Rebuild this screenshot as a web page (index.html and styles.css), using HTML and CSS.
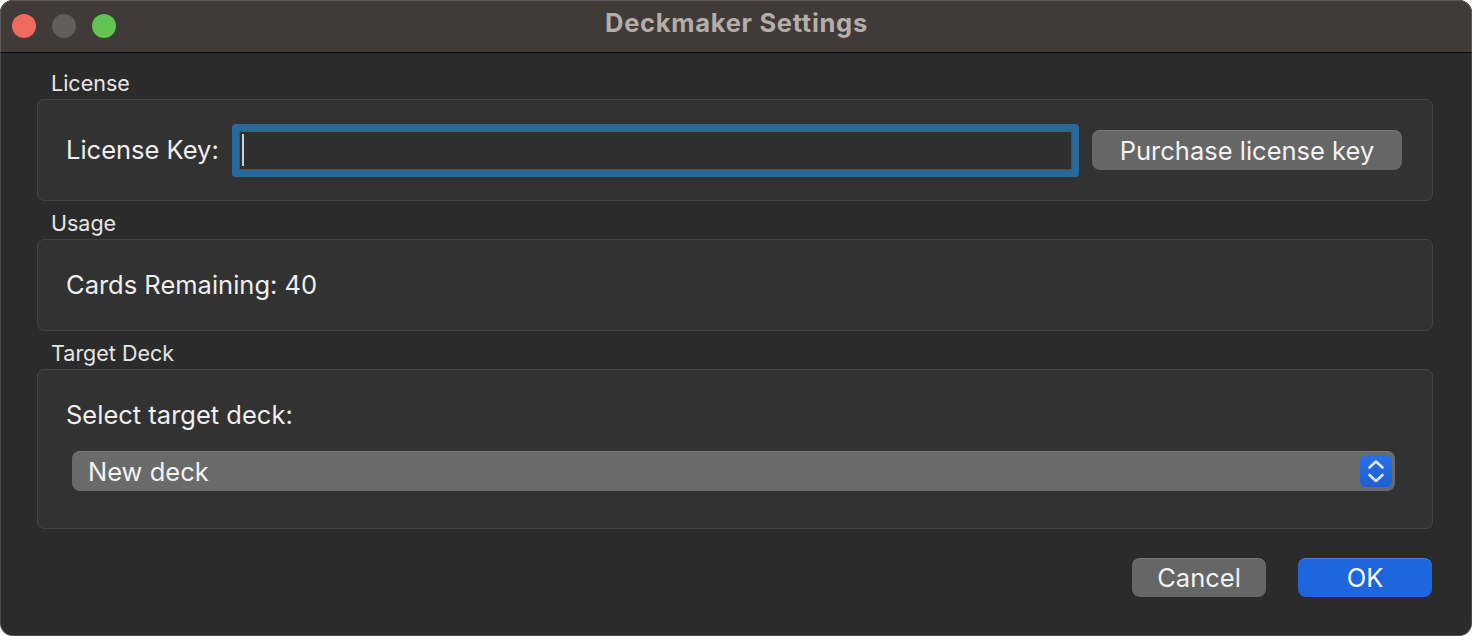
FILE: index.html
```html
<!DOCTYPE html>
<html lang="en">
<head>
<meta charset="utf-8">
<title>Deckmaker Settings</title>
<link rel="stylesheet" href="styles.css">
</head>
<body>
<div class="window">
  <div class="titlebar">
    <div class="lights">
      <span class="light red"></span>
      <span class="light gray"></span>
      <span class="light green"></span>
    </div>
    <div class="title">Deckmaker Settings</div>
    <div class="spacer"></div>
  </div>
  <div class="content">
    <div class="group-label">License</div>
    <div class="box box-license">
      <span class="text">License Key:</span>
      <div class="field"><span class="caret"></span></div>
      <button class="btn btn-gray btn-purchase">Purchase license key</button>
    </div>

    <div class="group-label">Usage</div>
    <div class="box box-usage">
      <span class="text">Cards Remaining: 40</span>
    </div>

    <div class="group-label">Target Deck</div>
    <div class="box box-target">
      <span class="text">Select target deck:</span>
      <div class="popup">
        <span class="popup-text">New deck</span>
        <span class="stepper">
          <svg width="32" height="32" viewBox="0 0 32 32" fill="none" stroke="#dde7f8" stroke-width="2.6" stroke-linecap="round" stroke-linejoin="round">
            <path d="M9.5 12.5 L16 6.5 L22.5 12.5"/>
            <path d="M9.5 20 L16 26 L22.5 20"/>
          </svg>
        </span>
      </div>
    </div>

    <div class="actions">
      <button class="btn btn-gray btn-action">Cancel</button>
      <button class="btn btn-blue btn-action">OK</button>
    </div>
  </div>
</div>
</body>
</html>
```
FILE: styles.css
```css
html, body {
  margin: 0;
  padding: 0;
  background: #ffffff;
}

body {
  font-family: "Inter", "Liberation Sans", sans-serif;
  -webkit-font-smoothing: antialiased;
}

.window {
  position: relative;
  width: 1472px;
  height: 636px;
  border-radius: 13px;
  overflow: hidden;
  background: #2b2b2b;
  display: flex;
  flex-direction: column;
}

.window::after {
  content: "";
  position: absolute;
  inset: 0;
  border-radius: 13px;
  box-shadow: inset 0 0 0 1px rgba(255, 255, 255, 0.16);
  pointer-events: none;
}

.titlebar {
  height: 52px;
  flex: none;
  background: #403b38;
  border-bottom: 1px solid #0c0c0c;
  display: grid;
  grid-template-columns: 1fr auto 1fr;
  align-items: center;
}

.lights {
  display: flex;
  gap: 16px;
  padding-left: 12px;
}

.light {
  width: 24px;
  height: 24px;
  border-radius: 50%;
  display: block;
}

.red { background: #ed6a5e; }
.gray { background: #625d5a; }
.green { background: #5fc452; }

.title {
  color: #b3aeab;
  font-weight: 700;
  font-size: 25.5px;
  letter-spacing: 0.7px;
  padding-bottom: 7px;
  padding-left: 1px;
}

.content {
  padding: 17px 39px 0 37px;
  display: flex;
  flex-direction: column;
}

.group-label {
  color: #e6e6e6;
  font-size: 21.5px;
  line-height: 26px;
  padding-left: 14px;
  margin-bottom: 3px;
}

.box {
  background: #323232;
  border: 1px solid #444444;
  border-radius: 7px;
  margin-bottom: 9px;
}

.text {
  color: #eeeeee;
  font-size: 25.5px;
  line-height: 32px;
}

.box-license {
  display: flex;
  align-items: center;
  gap: 19px;
  padding: 30px 30px 30px 28px;
}

.field {
  flex: 1;
  height: 37px;
  background: #2f2f2f;
  border: 1px solid #4e4e4e;
  border-top-color: #5a5a5a;
  box-shadow: 0 0 0 7px #28699b;
  border-radius: 1px;
  display: flex;
  align-items: center;
  padding-left: 2px;
  margin-left: 1px;
}

.caret {
  width: 2px;
  height: 32px;
  background: #cfcfcf;
}

.btn {
  font-family: inherit;
  font-size: 25.5px;
  color: #f2f2f2;
  border: none;
  border-radius: 8px;
  padding: 0;
  margin: 0;
}

.btn-gray {
  background: #666666;
  box-shadow: inset 0 1px 0 rgba(255, 255, 255, 0.12);
}

.btn-blue {
  background: #1d66de;
  box-shadow: inset 0 1px 0 rgba(255, 255, 255, 0.18);
  color: #ffffff;
}

.btn-purchase {
  width: 310px;
  height: 40px;
  flex: none;
  margin-left: 1px;
}

.box-usage {
  padding: 29px 28px 29px;
}

.box-target {
  display: flex;
  flex-direction: column;
  padding: 29px 30px 37px 28px;
}

.popup {
  margin: 20px 7px 0 6px;
  height: 40px;
  background: #6a6a6a;
  border-radius: 8px;
  box-shadow: inset 0 1px 0 rgba(255, 255, 255, 0.10);
  display: flex;
  align-items: center;
  justify-content: space-between;
  padding: 0 3px 0 16px;
}

.popup-text {
  color: #f2f2f2;
  font-size: 25.5px;
}

.stepper {
  width: 32px;
  height: 32px;
  border-radius: 6px;
  background: linear-gradient(#2a70e4, #1b5fd2);
  display: flex;
}

.actions {
  display: flex;
  justify-content: flex-end;
  gap: 32px;
  margin-top: 20px;
  padding-right: 1px;
}

.btn-action {
  width: 134px;
  height: 39px;
}
```
